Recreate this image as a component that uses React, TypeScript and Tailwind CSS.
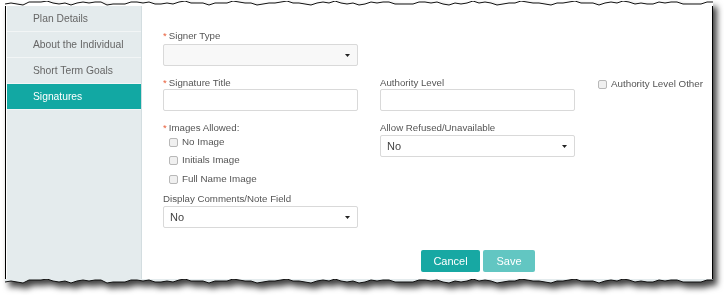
import React from "react";

const navItems = ["Plan Details", "About the Individual", "Short Term Goals", "Signatures"];

function Caret() {
  return (
    <svg width="5" height="3" viewBox="0 0 5 3" className="shrink-0">
      <path d="M0 0h5L2.5 3z" fill="#222" />
    </svg>
  );
}

function Label({ text, required }: { text: string; required?: boolean }) {
  return (
    <div className="h-[12px] leading-[12px] text-[9.7px] text-[#555]">
      {required && <span className="text-[#e8603c] mr-[2px]">*</span>}
      {text}
    </div>
  );
}

function Select({ value, gray }: { value?: string; gray?: boolean }) {
  return (
    <div
      className={`h-[22px] w-[195px] flex items-center justify-between pl-[6px] pr-[7px] border border-[#d9d9d9] rounded-[2px] text-[11px] text-[#444] ${
        gray ? "bg-[#f8f8f8]" : "bg-white"
      }`}
    >
      <span>{value}</span>
      <Caret />
    </div>
  );
}

function Input() {
  return <div className="h-[22px] w-[195px] border border-[#d9d9d9] rounded-[2px] bg-white" />;
}

function Check({ text }: { text: string }) {
  return (
    <div className="flex items-center h-[12px] text-[9.8px] text-[#555]">
      <span className="w-[9px] h-[9px] border border-[#b8b8b8] rounded-[2px] bg-[#f0f0f0] mr-[4px]" />
      {text}
    </div>
  );
}

function TornEdge({ bottom }: { bottom?: boolean }) {
  const pts: string[] = [];
  for (let x = 0; x <= 708; x += 6) {
    const y = 2 + Math.round(Math.sin(x * 0.13) * 1.2 + Math.cos(x * 0.37) * 0.8);
    pts.push(`${x},${y}`);
  }
  return (
    <svg width="708" height="5" viewBox="0 0 708 5" className="block">
      <polygon
        points={bottom ? `0,0 ${pts.join(" ")} 708,0` : `0,5 ${pts.join(" ")} 708,5`}
        fill={bottom ? "#e4ebed" : "#ffffff"}
      />
      <polyline points={pts.join(" ")} fill="none" stroke="#111" strokeWidth="1" />
    </svg>
  );
}

export default function App() {
  return (
    <div className="w-[724px] h-[295px] bg-white pt-[1px] pl-[5px]" style={{ fontFamily: '"Liberation Sans", Arial, sans-serif' }}>
      <div className="w-[708px] drop-shadow-[4px_5px_3px_rgba(0,0,0,0.75)]">
        <TornEdge />
        <div className="flex h-[273px] bg-white border-x border-black pl-[1px]">
          <nav className="w-[135px] bg-[#e4ebed] border-r border-[#d3dde0] flex flex-col">
            {navItems.map((item) => (
              <div
                key={item}
                className={`h-[26px] flex items-center pl-[26px] text-[10.3px] border-b border-[#f2f5f6] ${
                  item === "Signatures" ? "bg-[#12a8a3] text-white" : "text-[#666]"
                }`}
              >
                {item}
              </div>
            ))}
          </nav>
          <main className="flex-1 pl-[21px] pt-[24px]">
            <Label text="Signer Type" required />
            <div className="mt-[2px]">
              <Select gray />
            </div>
            <div className="flex mt-[11px]">
              <div className="w-[217px]">
                <Label text="Signature Title" required />
                <Input />
              </div>
              <div className="w-[218px]">
                <Label text="Authority Level" />
                <Input />
              </div>
              <div className="pt-[1px]">
                <Check text="Authority Level Other" />
              </div>
            </div>
            <div className="flex mt-[11px]">
              <div className="w-[217px]">
                <Label text="Images Allowed:" required />
                <div className="pl-[6px] pt-[2px] flex flex-col gap-[6.5px]">
                  <Check text="No Image" />
                  <Check text="Initials Image" />
                  <Check text="Full Name Image" />
                </div>
                <div className="mt-[8px]">
                  <Label text="Display Comments/Note Field" />
                </div>
                <div className="mt-[1px]">
                  <Select value="No" />
                </div>
              </div>
              <div>
                <Label text="Allow Refused/Unavailable" />
                <div className="mt-[1px]">
                  <Select value="No" />
                </div>
              </div>
            </div>
            <div className="flex gap-[3px] ml-[258px] mt-[22px]">
              <button className="w-[59px] h-[22px] rounded-[2px] bg-[#17a8a3] text-white text-[11px]">Cancel</button>
              <button className="w-[52px] h-[22px] rounded-[2px] bg-[#62c6c2] text-white text-[11px]">Save</button>
            </div>
          </main>
        </div>
        <TornEdge bottom />
      </div>
    </div>
  );
}
